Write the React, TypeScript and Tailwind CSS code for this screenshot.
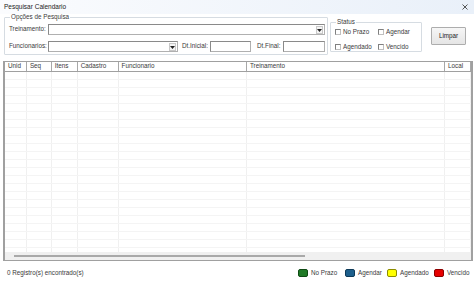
import React from "react";

const cols = [
  { name: "Unid", w: 22 },
  { name: "Seq", w: 25 },
  { name: "Itens", w: 26 },
  { name: "Cadastro", w: 41 },
  { name: "Funcionario", w: 129 },
  { name: "Treinamento", w: 199 },
  { name: "Local", w: 26 },
];

const rows = Array.from({ length: 23 });

function Arrow() {
  return (
    <div className="w-[7px] h-[8px] mt-[1px] mr-[1px] border border-[#c8c8c8] bg-[#f4f4f4] flex items-center justify-center">
      <svg width="5" height="3" viewBox="0 0 5 3">
        <path d="M0 0 L5 0 L2.5 3 Z" fill="#222" />
      </svg>
    </div>
  );
}

function Input({ w, combo }: { w: number; combo?: boolean }) {
  return (
    <div
      className="h-[11px] border border-[#b0b0b0] border-t-[#8a8a8a] border-l-[#8a8a8a] bg-white flex justify-end"
      style={{ width: w }}
    >
      {combo && <Arrow />}
    </div>
  );
}

function Check({ label }: { label: string }) {
  return (
    <div className="flex items-center gap-[2px] w-[43px]">
      <div className="w-[6px] h-[6px] border border-[#c0c0c0] border-t-[#808080] border-l-[#808080] bg-white" />
      <span>{label}</span>
    </div>
  );
}

function Legend({ color, border, label, w }: { color: string; border: string; label: string; w?: string }) {
  return (
    <div className={`flex items-center gap-[3px] ${w ?? ""}`}>
      <div className="w-[10px] h-[8px] rounded-[2px] border" style={{ background: color, borderColor: border }} />
      <span>{label}</span>
    </div>
  );
}

export default function App() {
  return (
    <div className="w-[474px] h-[284px] bg-white flex flex-col text-[6.3px] leading-none text-[#3a3a3a] font-['Liberation_Sans',Arial,sans-serif] overflow-hidden">
      {/* Title bar */}
      <div className="h-[14px] flex items-center justify-between pl-[4px] pr-[4px] bg-gradient-to-r from-[#fbfcfe] to-[#e9f0f9] text-[#222]">
        <span className="text-[6.5px]">Pesquisar Calendario</span>
        <svg width="6" height="6" viewBox="0 0 6 6" className="mr-[2px]">
          <path d="M0.5 0.5 L5.5 5.5 M5.5 0.5 L0.5 5.5" stroke="#444" strokeWidth="0.9" />
        </svg>
      </div>

      {/* Top area */}
      <div className="h-[47px] flex items-start">
        {/* Opções de Pesquisa */}
        <div className="relative ml-[4px] mt-[3px] w-[324px] h-[38px] border border-[#d6dce2] rounded-[1px] pl-[4px] pt-[6px] flex flex-col gap-[6px]">
          <span className="absolute left-[5px] top-[-4px] bg-white px-[1px]">Opções de Pesquisa</span>
          <div className="flex items-center">
            <span className="w-[39px]">Treinamento:</span>
            <Input w={277} combo />
          </div>
          <div className="flex items-center">
            <span className="w-[39px]">Funcionarios:</span>
            <Input w={130} combo />
            <span className="w-[28px] ml-[4px]">Dt.Inicial:</span>
            <Input w={41} />
            <span className="w-[26px] ml-[6px]">Dt.Final:</span>
            <Input w={42} />
          </div>
        </div>

        {/* Status */}
        <div className="relative ml-[2px] mt-[8px] w-[92px] h-[30px] border border-[#d6dce2] rounded-[1px] pl-[4px] pt-[6px] flex flex-col gap-[9px]">
          <span className="absolute left-[5px] top-[-4px] bg-white px-[1px]">Status</span>
          <div className="flex">
            <Check label="No Prazo" />
            <Check label="Agendar" />
          </div>
          <div className="flex">
            <Check label="Agendado" />
            <Check label="Vencido" />
          </div>
        </div>

        {/* Limpar */}
        <div className="ml-[9px] mt-[13px] w-[35px] h-[18px] border border-[#adadad] rounded-[1px] bg-gradient-to-b from-[#f6f6f6] to-[#e5e5e5] flex items-center justify-center text-[#222]">
          Limpar
        </div>
      </div>

      {/* Grid */}
      <div className="ml-[3px] w-[470px] h-[200px] border-t border-l-2 border-r-2 border-b border-[#a0a0a0] flex flex-col bg-white">
        <div className="h-[10px] flex border-b border-[#a0a0a0] shrink-0">
          {cols.map((c) => (
            <div
              key={c.name}
              className="h-full border-r border-[#a8a8a8] pl-[3px] flex items-center"
              style={{ width: c.w }}
            >
              {c.name}
            </div>
          ))}
        </div>
        <div className="flex-1 overflow-hidden flex flex-col">
          {rows.map((_, i) => (
            <div key={i} className="h-[8px] shrink-0 flex border-b border-[#f4f4f4]">
              {cols.map((c) => (
                <div key={c.name} className="h-full border-r border-[#f0f0f0]" style={{ width: c.w }} />
              ))}
            </div>
          ))}
        </div>
        <div className="h-[8px] shrink-0 bg-[#f0f0f0] flex items-center">
          <div className="ml-[9px] w-[291px] h-[2px] bg-[#a9a9a9]" />
        </div>
      </div>

      {/* Footer */}
      <div className="flex-1 flex items-center justify-between pl-[7px] pr-[4px] pt-[1px]">
        <span>0 Registro(s) encontrado(s)</span>
        <div className="flex items-center">
          <Legend color="#1f7a26" border="#0f4a14" label="No Prazo" w="w-[47px]" />
          <Legend color="#1d5f8c" border="#0e3a58" label="Agendar" w="w-[42px]" />
          <Legend color="#ffff00" border="#8c8c00" label="Agendado" w="w-[47px]" />
          <Legend color="#e60000" border="#8c0000" label="Vencido" w="w-[36px]" />
        </div>
      </div>
    </div>
  );
}
